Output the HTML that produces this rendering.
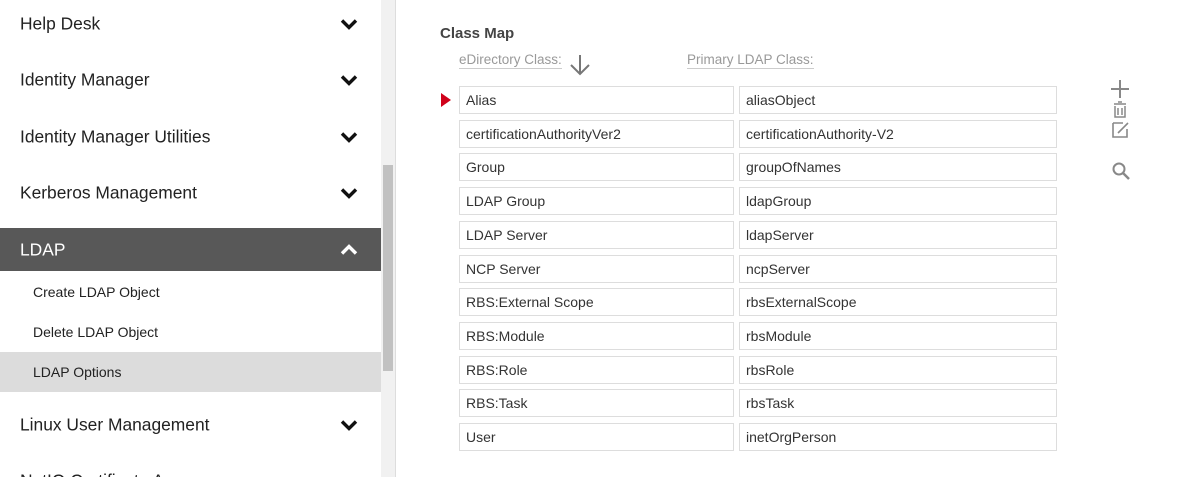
<!DOCTYPE html>
<html><head><style>
html,body{margin:0;width:1178px;height:477px;overflow:hidden}
body{background:#fff;font-family:"Liberation Sans",sans-serif;position:relative}
.side{position:absolute;left:0;top:0;width:381px;height:477px;overflow:hidden}
.it{position:absolute;left:0;width:381px;height:56px;font-size:17.4px;color:#222}
.it span{position:absolute;left:20px;top:50%;transform:translateY(-50%)}
.it svg{position:absolute;left:340px;top:50%;margin-top:-6px}
.sub{position:absolute;left:0;width:381px;height:40px;font-size:14px;color:#222}
.sub span{position:absolute;left:33px;top:50%;transform:translateY(-50%)}
.sb{position:absolute;left:381px;top:0;width:14px;height:477px;background:#f1f1f1;border-right:1px solid #ddd}
.th{position:absolute;left:383px;top:165px;width:10px;height:206px;background:#c1c1c1}
.c{position:absolute;height:26px;border:1px solid #ddd;font-size:14px;color:#333;line-height:26px;padding-left:6px;box-sizing:content-box}
.hd{position:absolute;top:52px;font-size:13.5px;color:#999;border-bottom:1px solid #ccc;line-height:16px}
</style></head><body>
<div class="side">
<div class="it" style="top:-4px"><span>Help Desk</span><svg width="18" height="12"><path d="M2 2.5l7 7 7-7" stroke="#111" stroke-width="3.4" fill="none"/></svg></div>
<div class="it" style="top:52px"><span>Identity Manager</span><svg width="18" height="12"><path d="M2 2.5l7 7 7-7" stroke="#111" stroke-width="3.4" fill="none"/></svg></div>
<div class="it" style="top:109px"><span>Identity Manager Utilities</span><svg width="18" height="12"><path d="M2 2.5l7 7 7-7" stroke="#111" stroke-width="3.4" fill="none"/></svg></div>
<div class="it" style="top:165px"><span>Kerberos Management</span><svg width="18" height="12"><path d="M2 2.5l7 7 7-7" stroke="#111" stroke-width="3.4" fill="none"/></svg></div>
<div class="it" style="top:228px;height:43px;background:#585858;color:#fff"><span>LDAP</span><svg width="18" height="12"><path d="M2 9.5l7-7 7 7" stroke="#fff" stroke-width="3.4" fill="none"/></svg></div>
<div class="sub" style="top:272px"><span>Create LDAP Object</span></div>
<div class="sub" style="top:312px"><span>Delete LDAP Object</span></div>
<div class="sub" style="top:352px;background:#dcdcdc"><span>LDAP Options</span></div>
<div class="it" style="top:397px"><span>Linux User Management</span><svg width="18" height="12"><path d="M2 2.5l7 7 7-7" stroke="#111" stroke-width="3.4" fill="none"/></svg></div>
<div class="it" style="top:453px"><span>NetIQ Certificate Access</span></div>
</div>
<div class="sb"></div><div class="th"></div>
<div style="position:absolute;left:440px;top:25px;font-size:15px;font-weight:bold;color:#444">Class Map</div>
<div class="hd" style="left:459px">eDirectory Class:</div>
<svg style="position:absolute;left:567px;top:54px" width="26" height="22"><path d="M13 1v19M4 11l9 9 9-9" stroke="#777" stroke-width="2" fill="none"/></svg>
<div class="hd" style="left:687px">Primary LDAP Class:</div>
<svg style="position:absolute;left:441px;top:93px" width="10" height="14"><path d="M0 0l10 7-10 7z" fill="#d0021b"/></svg>
<div id="rows"></div>
<svg style="position:absolute;left:1108px;top:78px" width="30" height="106" fill="none" stroke="#888" stroke-width="2">
<path d="M12 2v18M3 11h18"/>
<path d="M6 26h12M10 24h4M7 28v11h10V28M10 30v7M14 30v7" stroke-width="1.5"/>
<path d="M5 45h10M5 45v14h14V51M10 55l10-10" stroke-width="1.6"/>
<circle cx="11" cy="91" r="5.5"/><path d="M15 95l6 6" stroke-width="2.5"/>
</svg>
<script>
var d=[["Alias","aliasObject"],["certificationAuthorityVer2","certificationAuthority-V2"],["Group","groupOfNames"],["LDAP Group","ldapGroup"],["LDAP Server","ldapServer"],["NCP Server","ncpServer"],["RBS:External Scope","rbsExternalScope"],["RBS:Module","rbsModule"],["RBS:Role","rbsRole"],["RBS:Task","rbsTask"],["User","inetOrgPerson"]];
var h="";d.forEach(function(r,i){var t=86+i*33.7;h+='<div class="c" style="left:459px;top:'+t+'px;width:267px">'+r[0]+'</div><div class="c" style="left:739px;top:'+t+'px;width:310px">'+r[1]+'</div>';});
document.getElementById("rows").innerHTML=h;
</script>
</body></html>
